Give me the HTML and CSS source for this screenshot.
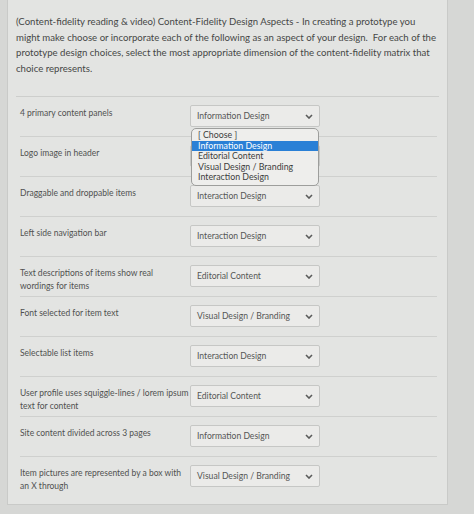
FILE: index.html
```html
<!doctype html>
<html lang="en">
    <head>
        <meta charset="UTF-8" />
        <meta name="viewport" content="width=device-width, initial-scale=1.0" />
        <title>Quiz Question</title>
        <link rel="stylesheet" href="styles.css">
    </head>
    <body>
        <!-- Question panel -->
        <div class="question">
            <p class="question-text">
                (Content-fidelity reading &amp; video) Content-Fidelity Design Aspects - In creating a prototype you
                might make choose or incorporate each of the following as an aspect of your design.&nbsp; For each of the
                prototype design choices, select the most appropriate dimension of the content-fidelity matrix that
                choice represents.
            </p>
            <div class="answers">
                <div class="row">
                    <div class="label">4 primary content panels</div>
                    <div class="select-wrap">
                        <div class="select"><span>Information Design</span>
                            <svg class="chev" width="8" height="5" viewBox="0 0 8 5"><path d="M1 1 L4 4 L7 1" /></svg>
                        </div>
                        <!-- open dropdown -->
                        <ul class="options">
                            <li>[ Choose ]</li>
                            <li class="selected">Information Design</li>
                            <li>Editorial Content</li>
                            <li>Visual Design / Branding</li>
                            <li>Interaction Design</li>
                        </ul>
                    </div>
                </div>
                <div class="row">
                    <div class="label">Logo image in header</div>
                    <div class="select-wrap">
                        <!-- covered by the open list above -->
                        <div class="select"><span></span>
                            <svg class="chev" width="8" height="5" viewBox="0 0 8 5"><path d="M1 1 L4 4 L7 1" /></svg>
                        </div>
                    </div>
                </div>
                <div class="row">
                    <div class="label">Draggable and droppable items</div>
                    <div class="select-wrap">
                        <div class="select"><span>Interaction Design</span>
                            <svg class="chev" width="8" height="5" viewBox="0 0 8 5"><path d="M1 1 L4 4 L7 1" /></svg>
                        </div>
                    </div>
                </div>
                <div class="row">
                    <div class="label">Left side navigation bar</div>
                    <div class="select-wrap">
                        <div class="select"><span>Interaction Design</span>
                            <svg class="chev" width="8" height="5" viewBox="0 0 8 5"><path d="M1 1 L4 4 L7 1" /></svg>
                        </div>
                    </div>
                </div>
                <div class="row">
                    <div class="label">Text descriptions of items show real<br>wordings for items</div>
                    <div class="select-wrap">
                        <div class="select"><span>Editorial Content</span>
                            <svg class="chev" width="8" height="5" viewBox="0 0 8 5"><path d="M1 1 L4 4 L7 1" /></svg>
                        </div>
                    </div>
                </div>
                <div class="row">
                    <div class="label">Font selected for item text</div>
                    <div class="select-wrap">
                        <div class="select"><span>Visual Design / Branding</span>
                            <svg class="chev" width="8" height="5" viewBox="0 0 8 5"><path d="M1 1 L4 4 L7 1" /></svg>
                        </div>
                    </div>
                </div>
                <div class="row">
                    <div class="label">Selectable list items</div>
                    <div class="select-wrap">
                        <div class="select"><span>Interaction Design</span>
                            <svg class="chev" width="8" height="5" viewBox="0 0 8 5"><path d="M1 1 L4 4 L7 1" /></svg>
                        </div>
                    </div>
                </div>
                <div class="row">
                    <div class="label">User profile uses squiggle-lines / lorem ipsum text for content</div>
                    <div class="select-wrap">
                        <div class="select"><span>Editorial Content</span>
                            <svg class="chev" width="8" height="5" viewBox="0 0 8 5"><path d="M1 1 L4 4 L7 1" /></svg>
                        </div>
                    </div>
                </div>
                <div class="row">
                    <div class="label">Site content divided across 3 pages</div>
                    <div class="select-wrap">
                        <div class="select"><span>Information Design</span>
                            <svg class="chev" width="8" height="5" viewBox="0 0 8 5"><path d="M1 1 L4 4 L7 1" /></svg>
                        </div>
                    </div>
                </div>
                <div class="row last">
                    <div class="label">Item pictures are represented by a box with an X through</div>
                    <div class="select-wrap">
                        <div class="select"><span>Visual Design / Branding</span>
                            <svg class="chev" width="8" height="5" viewBox="0 0 8 5"><path d="M1 1 L4 4 L7 1" /></svg>
                        </div>
                    </div>
                </div>
            </div>
        </div>
    </body>
</html>
```

FILE: styles.css
```css
body {
    font-family: Lato, "Liberation Sans", sans-serif;
    margin: 0;
    padding: 0;
    background: #d6d7d5;
    color: #4a4b4a;
}
.question {
    width: 441px;
    height: 505px;
    margin-left: 7px;
    box-sizing: border-box;
    padding: 0 8px;
    background: #e3e4e2;
    border: 1px solid #c9cac8;
    border-top: none;
}
.question-text {
    margin: 0;
    padding-top: 14px;
    height: 82px;
    font-size: 9.6px;
    line-height: 15.6px;
    color: #464746;
    border-bottom: 1px solid #cdcecc;
}
.answers {
    padding: 0 2px 0 4px;
}
.row {
    display: flex;
    align-items: flex-start;
    height: 31px;
    padding-top: 8px;
    border-bottom: 1px solid #cfd0ce;
}
.row.last {
    border-bottom: none;
}
.label {
    width: 170px;
    flex-shrink: 0;
    padding-top: 2px;
    font-size: 8.5px;
    line-height: 13px;
    color: #505150;
}
.select-wrap {
    position: relative;
}
.select {
    width: 130px;
    height: 22px;
    box-sizing: border-box;
    display: flex;
    align-items: center;
    justify-content: space-between;
    padding: 0 6px;
    background: #ebebe9;
    border: 1px solid #c6c7c5;
    border-radius: 2px;
    font-size: 8.6px;
    color: #555655;
}
.chev path {
    fill: none;
    stroke: #5a5b5a;
    stroke-width: 1.6;
}
.options {
    position: absolute;
    z-index: 10;
    top: 23px;
    left: 1px;
    width: 128px;
    margin: 0;
    padding: 1px 0 2px;
    box-sizing: border-box;
    list-style: none;
    background: #eeeeec;
    border: 1px solid #9d9e9c;
    border-radius: 5px;
    font-size: 8.8px;
    line-height: 10.6px;
    color: #3c3d3c;
}
.options li {
    padding: 0 6px;
}
.options li.selected {
    background: #2a80d6;
    color: #fff;
}
```
